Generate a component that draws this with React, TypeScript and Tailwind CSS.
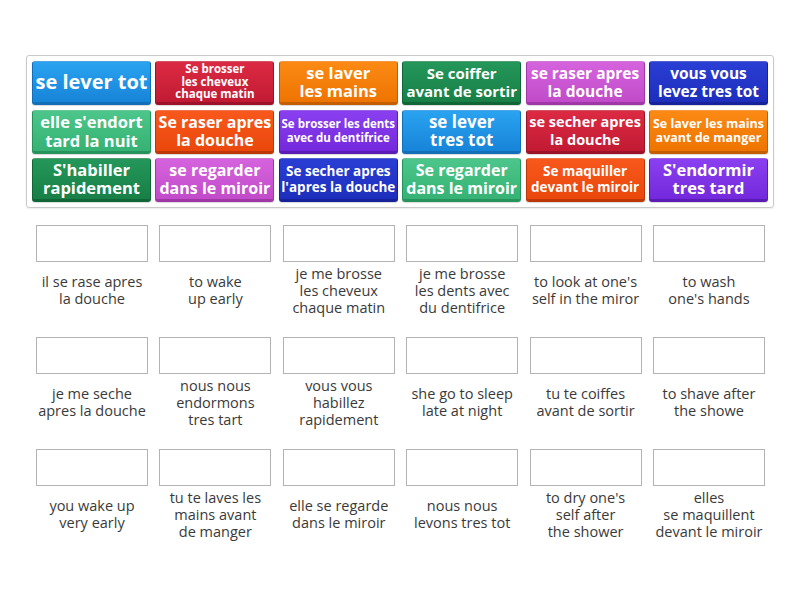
import React from 'react';

type Tile = { lines: string[]; color: string; size: string };

const tiles: Tile[] = [
  { lines: ['se lever tot'], color: 'from-[#2aa3f0] to-[#1784d8] border-[#136fb8]', size: 'text-[20px] leading-[22px]' },
  { lines: ['Se brosser', 'les cheveux', 'chaque matin'], color: 'from-[#dc2a43] to-[#c21a33] border-[#9c1228]', size: 'text-[11.5px] leading-[12.5px]' },
  { lines: ['se laver', 'les mains'], color: 'from-[#fb8a14] to-[#ee7400] border-[#c45e00]', size: 'text-[16.5px] leading-[18px]' },
  { lines: ['Se coiffer', 'avant de sortir'], color: 'from-[#24975a] to-[#187f46] border-[#116638]', size: 'text-[15px] leading-[18px]' },
  { lines: ['se raser apres', 'la douche'], color: 'from-[#d663de] to-[#c14bc9] border-[#9f37a8]', size: 'text-[15.5px] leading-[18px]' },
  { lines: ['vous vous', 'levez tres tot'], color: 'from-[#2a3ed4] to-[#1d2ebc] border-[#15229a]', size: 'text-[15.5px] leading-[18px]' },

  { lines: ["elle s'endort", 'tard la nuit'], color: 'from-[#4cc68a] to-[#36b274] border-[#27935c]', size: 'text-[16.5px] leading-[19px]' },
  { lines: ['Se raser apres', 'la douche'], color: 'from-[#f9581c] to-[#e9470c] border-[#be3706]', size: 'text-[16px] leading-[18px]' },
  { lines: ['Se brosser les dents', 'avec du dentifrice'], color: 'from-[#8a3ff0] to-[#7428dc] border-[#5b1cb5]', size: 'text-[11.5px] leading-[14px]' },
  { lines: ['se lever', 'tres tot'], color: 'from-[#2aa3f0] to-[#1784d8] border-[#136fb8]', size: 'text-[17px] leading-[18px]' },
  { lines: ['se secher apres', 'la douche'], color: 'from-[#dc2a43] to-[#c21a33] border-[#9c1228]', size: 'text-[14.5px] leading-[18px]' },
  { lines: ['Se laver les mains', 'avant de manger'], color: 'from-[#fb8a14] to-[#ee7400] border-[#c45e00]', size: 'text-[12.5px] leading-[14px]' },

  { lines: ["S'habiller", 'rapidement'], color: 'from-[#24975a] to-[#187f46] border-[#116638]', size: 'text-[16.5px] leading-[18px]' },
  { lines: ['se regarder', 'dans le miroir'], color: 'from-[#d663de] to-[#c14bc9] border-[#9f37a8]', size: 'text-[16px] leading-[18px]' },
  { lines: ['Se secher apres', "l'apres la douche"], color: 'from-[#2a3ed4] to-[#1d2ebc] border-[#15229a]', size: 'text-[13.5px] leading-[16px]' },
  { lines: ['Se regarder', 'dans le miroir'], color: 'from-[#4cc68a] to-[#36b274] border-[#27935c]', size: 'text-[16px] leading-[18px]' },
  { lines: ['Se maquiller', 'devant le miroir'], color: 'from-[#f9581c] to-[#e9470c] border-[#be3706]', size: 'text-[13.5px] leading-[16px]' },
  { lines: ["S'endormir", 'tres tard'], color: 'from-[#8a3ff0] to-[#7428dc] border-[#5b1cb5]', size: 'text-[16.5px] leading-[18px]' },
];

const labels: string[][] = [
  ['il se rase apres', 'la douche'],
  ['to wake', 'up early'],
  ['je me brosse', 'les cheveux', 'chaque matin'],
  ['je me brosse', 'les dents avec', 'du dentifrice'],
  ["to look at one's", 'self in the miror'],
  ['to wash', "one's hands"],

  ['je me seche', 'apres la douche'],
  ['nous nous', 'endormons', 'tres tart'],
  ['vous vous', 'habillez', 'rapidement'],
  ['she go to sleep', 'late at night'],
  ['tu te coiffes', 'avant de sortir'],
  ['to shave after', 'the showe'],

  ['you wake up', 'very early'],
  ['tu te laves les', 'mains avant', 'de manger'],
  ['elle se regarde', 'dans le miroir'],
  ['nous nous', 'levons tres tot'],
  ["to dry one's", 'self after', 'the shower'],
  ['elles', 'se maquillent', 'devant le miroir'],
];

export default function App() {
  return (
    <div className="w-[800px] h-[600px] bg-white font-['Open_Sans',sans-serif]">
      <div className="pt-[55px] pl-[26px]">
        <div className="w-[748px] border border-[#c9c9c9] rounded-[3px] shadow-[0_1px_2px_rgba(0,0,0,0.08)] p-[5px]">
          <div className="grid grid-cols-6 gap-x-[4.4px] gap-y-[4.5px]">
            {tiles.map((t, i) => (
              <div
                key={i}
                className={`h-[44px] rounded-[3px] bg-gradient-to-b ${t.color} border-b-[3px] border-x border-t border-t-white/25 shadow-[0_1px_1px_rgba(0,0,0,0.15)] flex flex-col items-center justify-center text-white font-bold text-center whitespace-nowrap ${t.size}`}
              >
                {t.lines.map((l, j) => (
                  <span key={j}>{l}</span>
                ))}
              </div>
            ))}
          </div>
        </div>
      </div>

      <div className="pt-[17px] pl-[36px]">
        <div className="grid grid-cols-[repeat(6,112px)] gap-x-[11.4px] gap-y-[17px]">
          {labels.map((lines, i) => (
            <div key={i} className="flex flex-col">
              <div className="h-[37px] border border-[#b3b3b3] bg-white" />
              <div className="h-[58px] pb-[2px] flex flex-col items-center justify-center text-center text-[14.5px] leading-[17px] text-[#3a3a3a] whitespace-nowrap">
                {lines.map((l, j) => (
                  <span key={j}>{l}</span>
                ))}
              </div>
            </div>
          ))}
        </div>
      </div>
    </div>
  );
}
